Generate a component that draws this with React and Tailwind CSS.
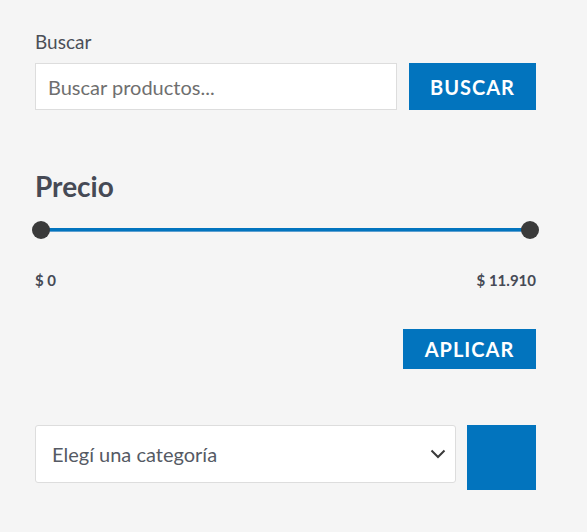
import React from "react";

export default function App() {
  return (
    <div className="min-h-[532px] w-[587px] bg-[#f5f5f5] pl-[35px] pt-[29px] font-['Lato','Liberation_Sans',sans-serif] text-[#4b4f58]">
      <div className="w-[501px]">
        <div className="text-[19px] leading-[25px]">Buscar</div>
        <div className="mt-[9px] flex h-[47px] gap-[12px]">
          <input
            className="h-full flex-1 border border-[#dddddd] bg-white px-[12px] text-[20px] text-[#4b4f58] outline-none placeholder:text-[#6f6f6f]"
            placeholder="Buscar productos..."
          />
          <button className="h-full w-[127px] bg-[#0274be] text-[20px] font-bold tracking-[1px] text-white">
            BUSCAR
          </button>
        </div>

        <h2 className="mt-[60px] text-[28px] font-bold leading-[1.2] text-[#464a55]">Precio</h2>

        <div className="relative mx-[6px] mt-[17px] h-[18px]">
          <div className="absolute left-0 right-0 top-[7px] h-[4px] border-b border-[#5d9fd0] bg-[#0274be]" />
          <div className="absolute left-[-9px] top-0 h-[18px] w-[18px] rounded-full bg-[#3a3a3a]" />
          <div className="absolute right-[-9px] top-0 h-[18px] w-[18px] rounded-full bg-[#3a3a3a]" />
        </div>

        <div className="mt-[31px] flex justify-between text-[15px] font-bold leading-[20px] text-[#464a55]">
          <span>$ 0</span>
          <span>$ 11.910</span>
        </div>

        <div className="mt-[39px] flex justify-end">
          <button className="h-[40px] w-[133px] bg-[#0274be] text-[20px] font-bold tracking-[1px] text-white">
            APLICAR
          </button>
        </div>

        <div className="mt-[56px] flex items-start gap-[11px]">
          <div className="flex h-[58px] w-[422px] items-center justify-between rounded-[3px] border border-[#dddddd] bg-white pl-[16px] pr-[9px]">
            <span className="text-[20px] text-[#555a64]">Elegí una categoría</span>
            <svg width="16" height="10" viewBox="0 0 16 10" fill="none">
              <path d="M1.5 1.5 L8 8 L14.5 1.5" stroke="#3a3a3a" strokeWidth="2" />
            </svg>
          </div>
          <div className="h-[65px] w-[69px] bg-[#0274be]" />
        </div>
      </div>
    </div>
  );
}
